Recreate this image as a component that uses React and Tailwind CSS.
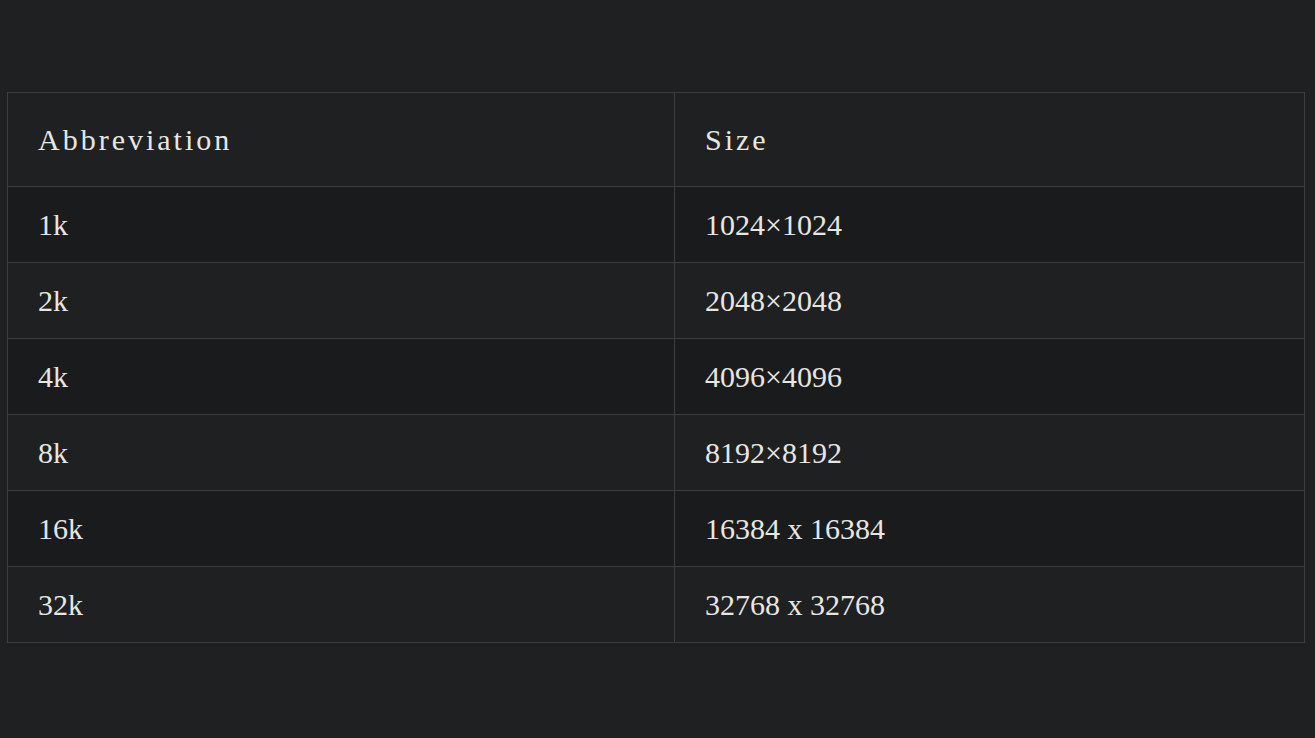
import React from "react";

const rows = [
  ["1k", "1024×1024"],
  ["2k", "2048×2048"],
  ["4k", "4096×4096"],
  ["8k", "8192×8192"],
  ["16k", "16384 x 16384"],
  ["32k", "32768 x 32768"],
];

export default function App() {
  return (
    <div
      className="w-[1315px] h-[738px] bg-[#1e2022] pt-[92px] pl-[7px] pr-[10px] text-[#e8e6e3]"
      style={{ fontFamily: '"Liberation Serif", "Times New Roman", serif' }}
    >
      <table className="w-[1298px] border-collapse text-[30px] leading-none">
        <thead>
          <tr className="h-[94px]">
            <th className="w-[667px] border border-[#3b3e40] pl-[30px] text-left font-normal tracking-[3px] text-[30px]">
              Abbreviation
            </th>
            <th className="border border-[#3b3e40] pl-[30px] text-left font-normal tracking-[3px]">
              Size
            </th>
          </tr>
        </thead>
        <tbody>
          {rows.map(([a, s], i) => (
            <tr
              key={a}
              className={i % 2 === 0 ? "h-[76px] bg-[#1a1b1d]" : "h-[76px] bg-[#1e2022]"}
            >
              <td className="border border-[#3b3e40] pl-[30px]">{a}</td>
              <td className="border border-[#3b3e40] pl-[30px]">{s}</td>
            </tr>
          ))}
        </tbody>
      </table>
    </div>
  );
}
